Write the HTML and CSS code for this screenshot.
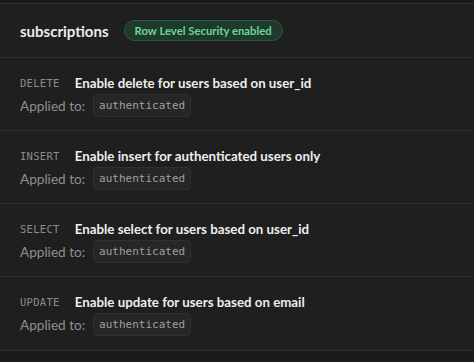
FILE: index.html
```html
<!DOCTYPE html>
<html lang="en">
<head>
    <meta charset="UTF-8">
    <meta name="viewport" content="width=device-width, initial-scale=1.0">
    <title>Policies</title>
    <link rel="stylesheet" href="styles.css">
</head>
<body>
    <div class="panel">
        <div class="panel-header">
            <h2>subscriptions</h2>
            <span class="badge">Row Level Security enabled</span>
        </div>

        <div class="policy">
            <div class="policy-title">
                <span class="cmd">DELETE</span>
                <span class="name">Enable delete for users based on user_id</span>
            </div>
            <div class="applied">
                <span>Applied to:</span>
                <code class="role">authenticated</code>
            </div>
        </div>
        <div class="policy">
            <div class="policy-title">
                <span class="cmd">INSERT</span>
                <span class="name">Enable insert for authenticated users only</span>
            </div>
            <div class="applied">
                <span>Applied to:</span>
                <code class="role">authenticated</code>
            </div>
        </div>
        <div class="policy">
            <div class="policy-title">
                <span class="cmd">SELECT</span>
                <span class="name">Enable select for users based on user_id</span>
            </div>
            <div class="applied">
                <span>Applied to:</span>
                <code class="role">authenticated</code>
            </div>
        </div>
        <div class="policy">
            <div class="policy-title">
                <span class="cmd">UPDATE</span>
                <span class="name">Enable update for users based on email</span>
            </div>
            <div class="applied">
                <span>Applied to:</span>
                <code class="role">authenticated</code>
            </div>
        </div>
    </div>
</body>
</html>
```

FILE: styles.css
```css
body {
    margin: 0;
    background-color: #1b1b1b;
    font-family: Lato, "Noto Sans", sans-serif;
    color: #ededed;
}
.panel {
    margin-top: 3px;
    background: #1f1f1f;
    border-top: 1px solid #2e2e2e;
    border-bottom: 1px solid #2e2e2e;
}
.panel-header {
    display: flex;
    align-items: center;
    gap: 15px;
    height: 53px;
    padding: 0 20px;
    border-bottom: 1px solid #2e2e2e;
}
.panel-header h2 {
    margin: 0;
    font-size: 15px;
    font-weight: 700;
    color: #ececec;
}
.badge {
    font-size: 11.3px;
    font-weight: 700;
    color: #6fd39b;
    background: #1d3a2a;
    border: 1px solid #2c5a40;
    border-radius: 12px;
    padding: 3px 10px;
}
.policy {
    height: 73px;
    padding: 16px 20px 0;
    box-sizing: border-box;
    border-bottom: 1px solid #2e2e2e;
}
.policy:last-child {
    border-bottom: none;
}
.policy-title {
    display: flex;
    align-items: center;
    gap: 15px;
    height: 18px;
}
.cmd {
    font-family: "DejaVu Sans Mono", monospace;
    font-size: 10.5px;
    color: #8c8c8c;
    letter-spacing: 0.3px;
}
.name {
    font-size: 13.3px;
    font-weight: 700;
    color: #ededed;
}
.applied {
    display: flex;
    align-items: center;
    gap: 8px;
    margin-top: 2px;
    font-size: 13.6px;
    color: #8f8f8f;
}
.role {
    font-family: "DejaVu Sans Mono", monospace;
    font-size: 11px;
    color: #a0a0a0;
    background: #262626;
    border: 1px solid #303030;
    border-radius: 4px;
    padding: 4px 5px;
}
```
